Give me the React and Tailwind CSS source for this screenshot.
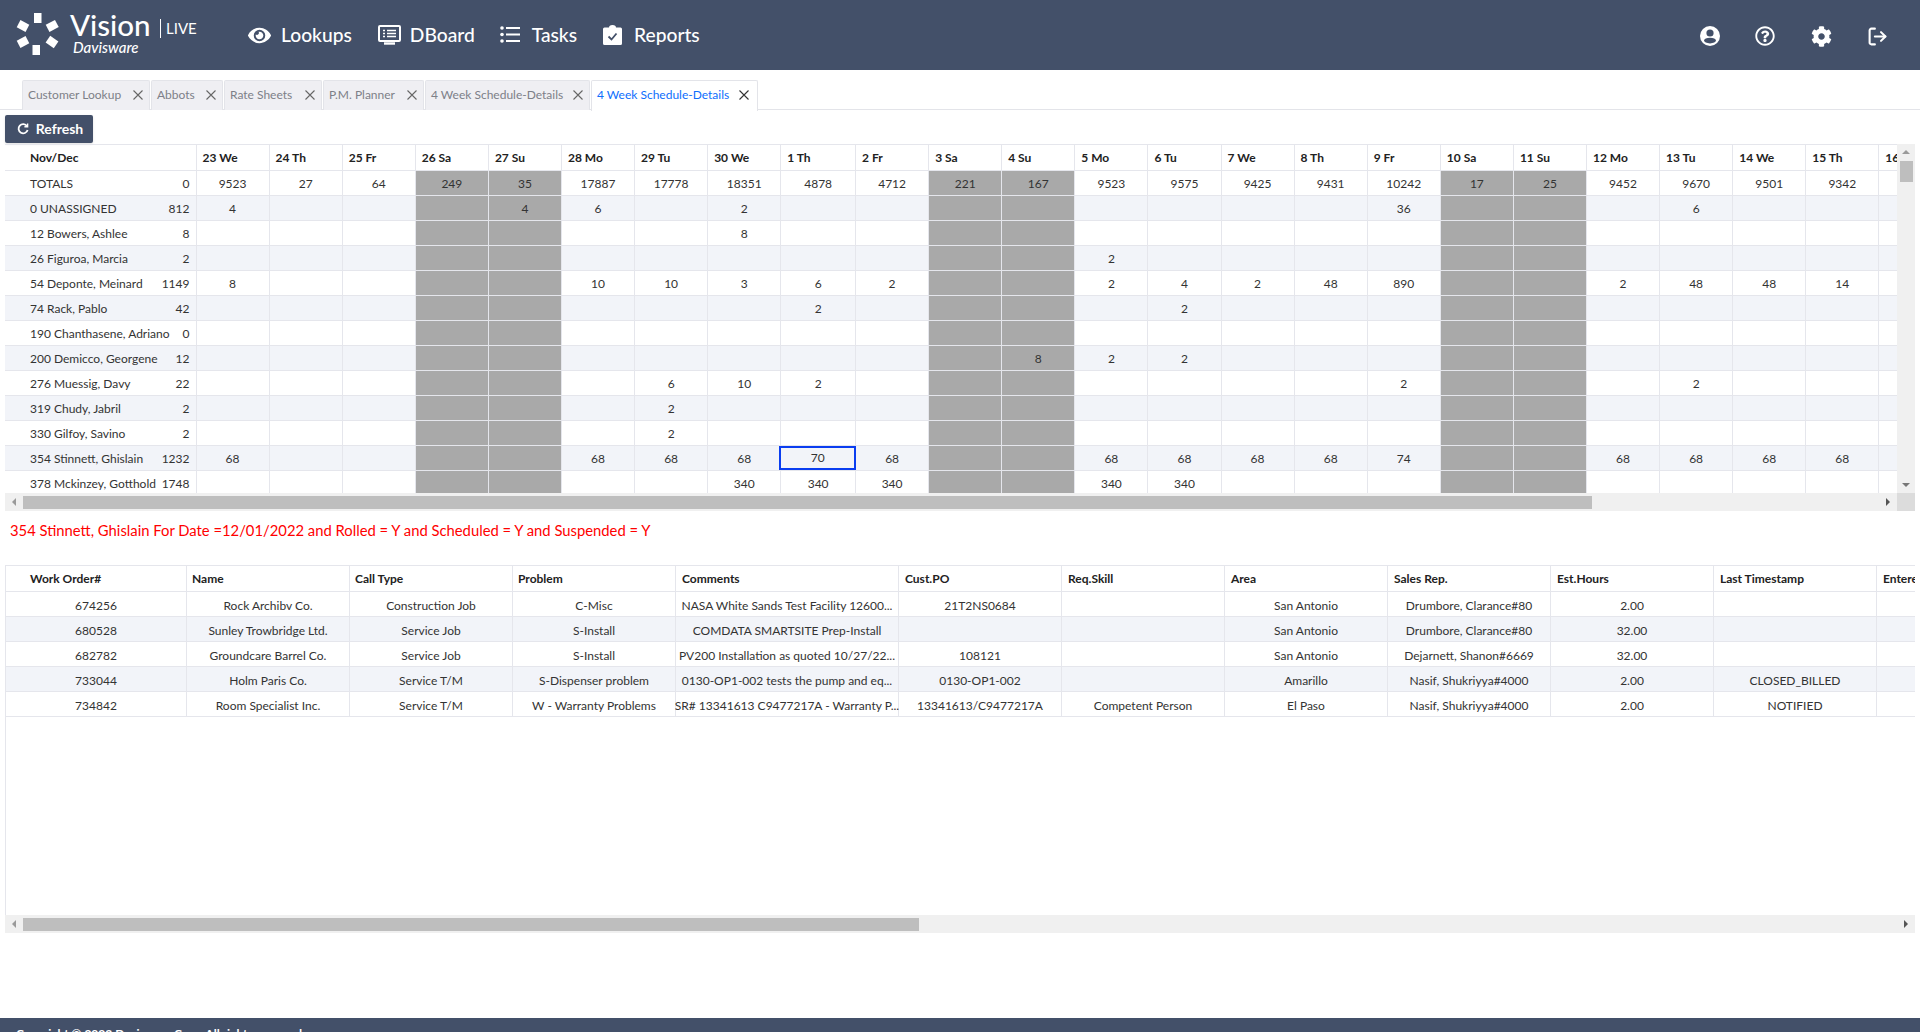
import React from "react";
import { FaEye, FaCog, FaRegQuestionCircle } from "react-icons/fa";
import { FiLogOut } from "react-icons/fi";

const days = ["23 We","24 Th","25 Fr","26 Sa","27 Su","28 Mo","29 Tu","30 We","1 Th","2 Fr","3 Sa","4 Su","5 Mo","6 Tu","7 We","8 Th","9 Fr","10 Sa","11 Su","12 Mo","13 Tu","14 We","15 Th","16 Fr"];
const weekend = [3, 4, 10, 11, 17, 18];

const rows = [
  { name: "TOTALS", total: 0, v: { 0: 9523, 1: 27, 2: 64, 3: 249, 4: 35, 5: 17887, 6: 17778, 7: 18351, 8: 4878, 9: 4712, 10: 221, 11: 167, 12: 9523, 13: 9575, 14: 9425, 15: 9431, 16: 10242, 17: 17, 18: 25, 19: 9452, 20: 9670, 21: 9501, 22: 9342 } },
  { name: "0 UNASSIGNED", total: 812, v: { 0: 4, 4: 4, 5: 6, 7: 2, 16: 36, 20: 6 } },
  { name: "12 Bowers, Ashlee", total: 8, v: { 7: 8 } },
  { name: "26 Figuroa, Marcia", total: 2, v: { 12: 2 } },
  { name: "54 Deponte, Meinard", total: 1149, v: { 0: 8, 5: 10, 6: 10, 7: 3, 8: 6, 9: 2, 12: 2, 13: 4, 14: 2, 15: 48, 16: 890, 19: 2, 20: 48, 21: 48, 22: 14 } },
  { name: "74 Rack, Pablo", total: 42, v: { 8: 2, 13: 2 } },
  { name: "190 Chanthasene, Adriano", total: 0, v: {} },
  { name: "200 Demicco, Georgene", total: 12, v: { 11: 8, 12: 2, 13: 2 } },
  { name: "276 Muessig, Davy", total: 22, v: { 6: 6, 7: 10, 8: 2, 16: 2, 20: 2 } },
  { name: "319 Chudy, Jabril", total: 2, v: { 6: 2 } },
  { name: "330 Gilfoy, Savino", total: 2, v: { 6: 2 } },
  { name: "354 Stinnett, Ghislain", total: 1232, v: { 0: 68, 5: 68, 6: 68, 7: 68, 8: 70, 9: 68, 12: 68, 13: 68, 14: 68, 15: 68, 16: 74, 19: 68, 20: 68, 21: 68, 22: 68 } },
  { name: "378 Mckinzey, Gotthold", total: 1748, v: { 7: 340, 8: 340, 9: 340, 12: 340, 13: 340 } },
];

const orderCols = [
  { t: "Work Order#", w: "w-[181px]", p: "pl-[24px]" },
  { t: "Name", w: "w-[163px]", p: "pl-[5px]" },
  { t: "Call Type", w: "w-[163px]", p: "pl-[5px]" },
  { t: "Problem", w: "w-[163px]", p: "pl-[5px]" },
  { t: "Comments", w: "w-[223px]", p: "pl-[6px]" },
  { t: "Cust.PO", w: "w-[163px]", p: "pl-[6px]" },
  { t: "Req.Skill", w: "w-[163px]", p: "pl-[6px]" },
  { t: "Area", w: "w-[163px]", p: "pl-[6px]" },
  { t: "Sales Rep.", w: "w-[163px]", p: "pl-[6px]" },
  { t: "Est.Hours", w: "w-[163px]", p: "pl-[6px]" },
  { t: "Last Timestamp", w: "w-[163px]", p: "pl-[6px]" },
  { t: "Entered By", w: "w-[163px]", p: "pl-[6px]" },
];

const orders = [
  ["674256", "Rock Archibv Co.", "Construction Job", "C-Misc", "NASA White Sands Test Facility 12600...", "21T2NS0684", "", "San Antonio", "Drumbore, Clarance#80", "2.00", "", ""],
  ["680528", "Sunley Trowbridge Ltd.", "Service Job", "S-Install", "COMDATA SMARTSITE Prep-Install", "", "", "San Antonio", "Drumbore, Clarance#80", "32.00", "", ""],
  ["682782", "Groundcare Barrel Co.", "Service Job", "S-Install", "PV200 Installation as quoted 10/27/22...", "108121", "", "San Antonio", "Dejarnett, Shanon#6669", "32.00", "", ""],
  ["733044", "Holm Paris Co.", "Service T/M", "S-Dispenser problem", "0130-OP1-002 tests the pump and eq...", "0130-OP1-002", "", "Amarillo", "Nasif, Shukriyya#4000", "2.00", "CLOSED_BILLED", ""],
  ["734842", "Room Specialist Inc.", "Service T/M", "W - Warranty Problems", "SR# 13341613 C9477217A - Warranty P...", "13341613/C9477217A", "Competent Person", "El Paso", "Nasif, Shukriyya#4000", "2.00", "NOTIFIED", ""],
];

const tabs = [
  { t: "Customer Lookup", w: "w-[128px]" },
  { t: "Abbots", w: "w-[72px]" },
  { t: "Rate Sheets", w: "w-[98px]" },
  { t: "P.M. Planner", w: "w-[101px]" },
  { t: "4 Week Schedule-Details", w: "w-[165px]" },
];

const Logo = () => (
  <svg width="44" height="44" viewBox="0 0 44 44" fill="white">
    <rect x="18" y="0" width="7.5" height="10" />
    <rect x="2" y="9" width="10" height="8" transform="rotate(28 7 13)" />
    <rect x="31" y="9" width="10.5" height="8" transform="rotate(-28 36 13)" />
    <rect x="2" y="25" width="10" height="8" transform="rotate(-28 7 29)" />
    <rect x="31" y="25" width="10" height="8" transform="rotate(35 36 29)" />
    <rect x="16.5" y="32" width="7.5" height="10" />
  </svg>
);

const BoardIcon = () => (
  <svg width="23" height="20" viewBox="0 0 23 20" fill="none" stroke="white">
    <rect x="1" y="1" width="21" height="15" rx="1" strokeWidth="2" />
    <path d="M5 5.5h2M9 5.5h9M5 8.5h2M9 8.5h9M5 11.5h2M9 11.5h9" strokeWidth="1.6" />
    <path d="M6 18.5h11" strokeWidth="2.4" />
  </svg>
);

const TasksIcon = () => (
  <svg width="20" height="17" viewBox="0 0 20 17" fill="white">
    <circle cx="2" cy="2" r="1.8" />
    <circle cx="2" cy="8.5" r="1.8" />
    <circle cx="2" cy="15" r="1.8" />
    <rect x="6" y="1" width="14" height="2" />
    <rect x="6" y="7.5" width="14" height="2" />
    <rect x="6" y="14" width="14" height="2" />
  </svg>
);

const ReportIcon = () => (
  <svg width="19" height="20" viewBox="0 0 19 20">
    <path d="M1.5 2.5H6a3.5 2.5 0 0 1 7 0h4.5A1.5 1.5 0 0 1 19 4v14.5a1.5 1.5 0 0 1-1.5 1.5H1.5A1.5 1.5 0 0 1 0 18.5V4a1.5 1.5 0 0 1 1.5-1.5z" fill="white" />
    <path d="M5.5 11.5l3 3 5-6" fill="none" stroke="#435069" strokeWidth="1.8" />
  </svg>
);

const UserIcon = () => (
  <svg width="20" height="20" viewBox="0 0 20 20">
    <circle cx="10" cy="10" r="10" fill="white" />
    <circle cx="10" cy="7" r="3.6" fill="#435069" />
    <ellipse cx="10" cy="14.6" rx="6" ry="2.8" fill="#435069" />
  </svg>
);

const CloseX = ({ color }) => (
  <svg width="10" height="10" viewBox="0 0 10 10" fill="none" stroke={color} strokeWidth="1.1" className="shrink-0">
    <path d="M0.5 0.5l9 9M9.5 0.5l-9 9" />
  </svg>
);

const NavItem = ({ icon, label, className }) => (
  <div className={`flex items-center ${className}`}>
    {icon}
    <span className="text-[19.2px] font-medium text-white leading-none">{label}</span>
  </div>
);

const Arrow = ({ d, fill = "#9a9a9a" }) => (
  <svg width="6" height="8" viewBox="0 0 6 8" fill={fill}>
    <path d={d} />
  </svg>
);

const ScrollX = ({ thumb, corner }) => (
  <div className="flex h-[18px] items-center bg-[#f0f0f0]">
    <div className="w-[18px] flex justify-center shrink-0">
      <Arrow d="M5 0v8L1 4z" />
    </div>
    <div className={`h-[13px] bg-[#bebebe] ${thumb}`}></div>
    <div className="ml-auto w-[18px] flex justify-center shrink-0">
      <Arrow d="M1 0v8l4-4z" fill="#555" />
    </div>
    {corner && <div className="w-[18px] h-[18px] bg-[#dcdcdc] shrink-0"></div>}
  </div>
);

const App = () => {
  return (
    <div className="flex flex-col h-[1032px] overflow-hidden bg-white font-['Lato','Liberation_Sans',sans-serif] text-[#333]">
      <header className="h-[70px] shrink-0 bg-[#435069] flex items-center">
        <div className="ml-[16px] mt-[-1px]">
          <Logo />
        </div>
        <div className="ml-[10px] flex flex-col mt-[-6px] text-white w-[78px]">
          <span className="text-[29.5px] leading-[30px] font-medium">Vision</span>
          <span className="text-[15px] leading-[15px] italic font-medium ml-[3px]">Davisware</span>
        </div>
        <div className="flex items-center text-white text-[15px] mt-[-14px] ml-[10px] w-[50px]">
          <span className="w-px h-[19px] bg-white mr-[5px] ml-[2px]"></span>LIVE
        </div>
        <NavItem className="ml-[40px] gap-[10px]" icon={<FaEye size={23} color="white" />} label="Lookups" />
        <NavItem className="ml-[26px] gap-[9px]" icon={<BoardIcon />} label="DBoard" />
        <NavItem className="ml-[25px] gap-[12px]" icon={<TasksIcon />} label="Tasks" />
        <NavItem className="ml-[26px] gap-[12px]" icon={<ReportIcon />} label="Reports" />
        <div className="ml-auto flex items-center gap-[35.5px] mr-[32px] mt-[2px]">
          <UserIcon />
          <FaRegQuestionCircle size={20} color="white" />
          <FaCog size={21} color="white" />
          <FiLogOut size={21} color="white" strokeWidth={2.4} />
        </div>
      </header>

      <div className="h-[40px] shrink-0 pt-[10px] pl-[22px] border-b border-[#e3e4e9] flex">
        {tabs.map((tab) => (
          <div key={tab.t} className={`${tab.w} h-[30px] mr-px pb-px bg-[#efeff3] border border-[#e3e4e9] border-b-0 rounded-t-[2px] flex items-center justify-between pl-[5px] pr-[6px] text-[12px] text-[#7d8088]`}>
            <span className="whitespace-nowrap">{tab.t}</span>
            <CloseX color="#666" />
          </div>
        ))}
        <div className="w-[167px] h-[31px] pb-[2px] bg-white border border-[#e3e4e9] border-b-0 rounded-t-[2px] flex items-center justify-between pl-[5px] pr-[8px] text-[12px] text-[#0d6efd]">
          <span className="whitespace-nowrap">4 Week Schedule-Details</span>
          <CloseX color="#333" />
        </div>
      </div>

      <div className="pl-[5px] pt-[5px] shrink-0">
        <button className="w-[88px] h-[28px] rounded-[2px] bg-[#435069] text-white text-[14px] font-bold flex items-center justify-center gap-[7px] shadow-sm pb-px pl-[2px]">
          <svg width="12" height="12" viewBox="0 0 12 12" fill="none" stroke="white" strokeWidth="1.8">
            <path d="M10 3.2A4.6 4.6 0 1 0 10.6 7" />
            <path d="M10.6 0.6v3.2H7.4" strokeWidth="1.4" />
          </svg>
          Refresh
        </button>
      </div>

      <div className="mt-px ml-[5px] w-[1910px] shrink-0">
        <div className="flex h-[349px]">
          <div className="w-[1892px] overflow-hidden border-t border-[#e5e6ec]">
            <div className="flex h-[26px] w-max font-bold text-[12px] text-[#222] border-b border-[#e5e6ec]">
              <div className="w-[191.5px] pl-[25px] flex items-center border-r border-[#e5e6ec]">Nov/Dec</div>
              {days.map((d, c) => (
                <div key={d} className={`${c === 8 ? "w-[74.8px]" : "w-[73.1px]"} pl-[6px] flex items-center border-r border-[#e5e6ec] whitespace-nowrap`}>{d}</div>
              ))}
            </div>
            {rows.map((r, i) => (
              <div key={r.name} className={`flex h-[25px] w-max text-[12px] border-b border-[#e5e6ec] ${i % 2 === 1 ? "bg-[#f2f4f9]" : "bg-white"}`}>
                <div className="w-[191.5px] pl-[25px] pr-[6px] pt-px flex items-center justify-between border-r border-[#e5e6ec]">
                  <span className="whitespace-nowrap">{r.name}</span>
                  <span>{r.total}</span>
                </div>
                {days.map((d, c) => {
                  const selected = i === 11 && c === 8;
                  return (
                    <div
                      key={d}
                      className={`flex items-center justify-center ${weekend.includes(c) ? "bg-[#a9a9a9]" : ""} ${
                        selected
                          ? "w-[76.8px] -ml-[2px] border-2 border-[#0a3df0]"
                          : `${c === 8 ? "w-[74.8px]" : "w-[73.1px]"} pt-px border-r border-[#e5e6ec]`
                      }`}
                    >
                      {r.v[c]}
                    </div>
                  );
                })}
              </div>
            ))}
          </div>
          <div className="w-[18px] bg-[#f0f0f0] flex flex-col items-center pt-[5px]">
            <svg width="8" height="6" viewBox="0 0 8 6" fill="#9a9a9a"><path d="M0 5h8L4 1z" /></svg>
            <div className="w-[13px] h-[21px] bg-[#bebebe] mt-[6px]"></div>
            <svg className="mt-auto mb-[5px]" width="8" height="6" viewBox="0 0 8 6" fill="#777"><path d="M0 1h8L4 5z" /></svg>
          </div>
        </div>
        <ScrollX thumb="w-[1569px]" corner />
      </div>

      <div className="h-[54px] shrink-0 pl-[10px] pt-[9px] text-[14.8px] leading-[20px] text-[#ff0000]">
        354 Stinnett, Ghislain For Date =12/01/2022 and Rolled = Y and Scheduled = Y and Suspended = Y
      </div>

      <div className="ml-[5px] w-[1910px] shrink-0">
        <div className="h-[350px] overflow-hidden border-t border-l border-[#e5e6ec]">
          <div className="flex h-[26px] w-max font-bold text-[12px] text-[#222] border-b border-[#e5e6ec]">
            {orderCols.map((col) => (
              <div key={col.t} className={`${col.w} ${col.p} pt-px flex items-center border-r border-[#e5e6ec] whitespace-nowrap`}>{col.t}</div>
            ))}
          </div>
          {orders.map((o, i) => (
            <div key={o[0]} className={`flex h-[25px] w-max text-[12px] border-b border-[#e5e6ec] ${i % 2 === 1 ? "bg-[#f2f4f9]" : "bg-white"}`}>
              {o.map((val, c) => (
                <div key={c} className={`${orderCols[c].w} pt-[3px] flex items-center justify-center border-r border-[#e5e6ec] whitespace-nowrap`}>{val}</div>
              ))}
            </div>
          ))}
        </div>
        <ScrollX thumb="w-[896px]" />
      </div>

      <footer className="mt-auto h-[14px] shrink-0 bg-[#435069] overflow-hidden pl-[16px] pt-[9px] text-[12px] font-bold leading-[14px] text-white">
        Copyright © 2023 Davisware Corp. All rights reserved.
      </footer>
    </div>
  );
};

export default App;
